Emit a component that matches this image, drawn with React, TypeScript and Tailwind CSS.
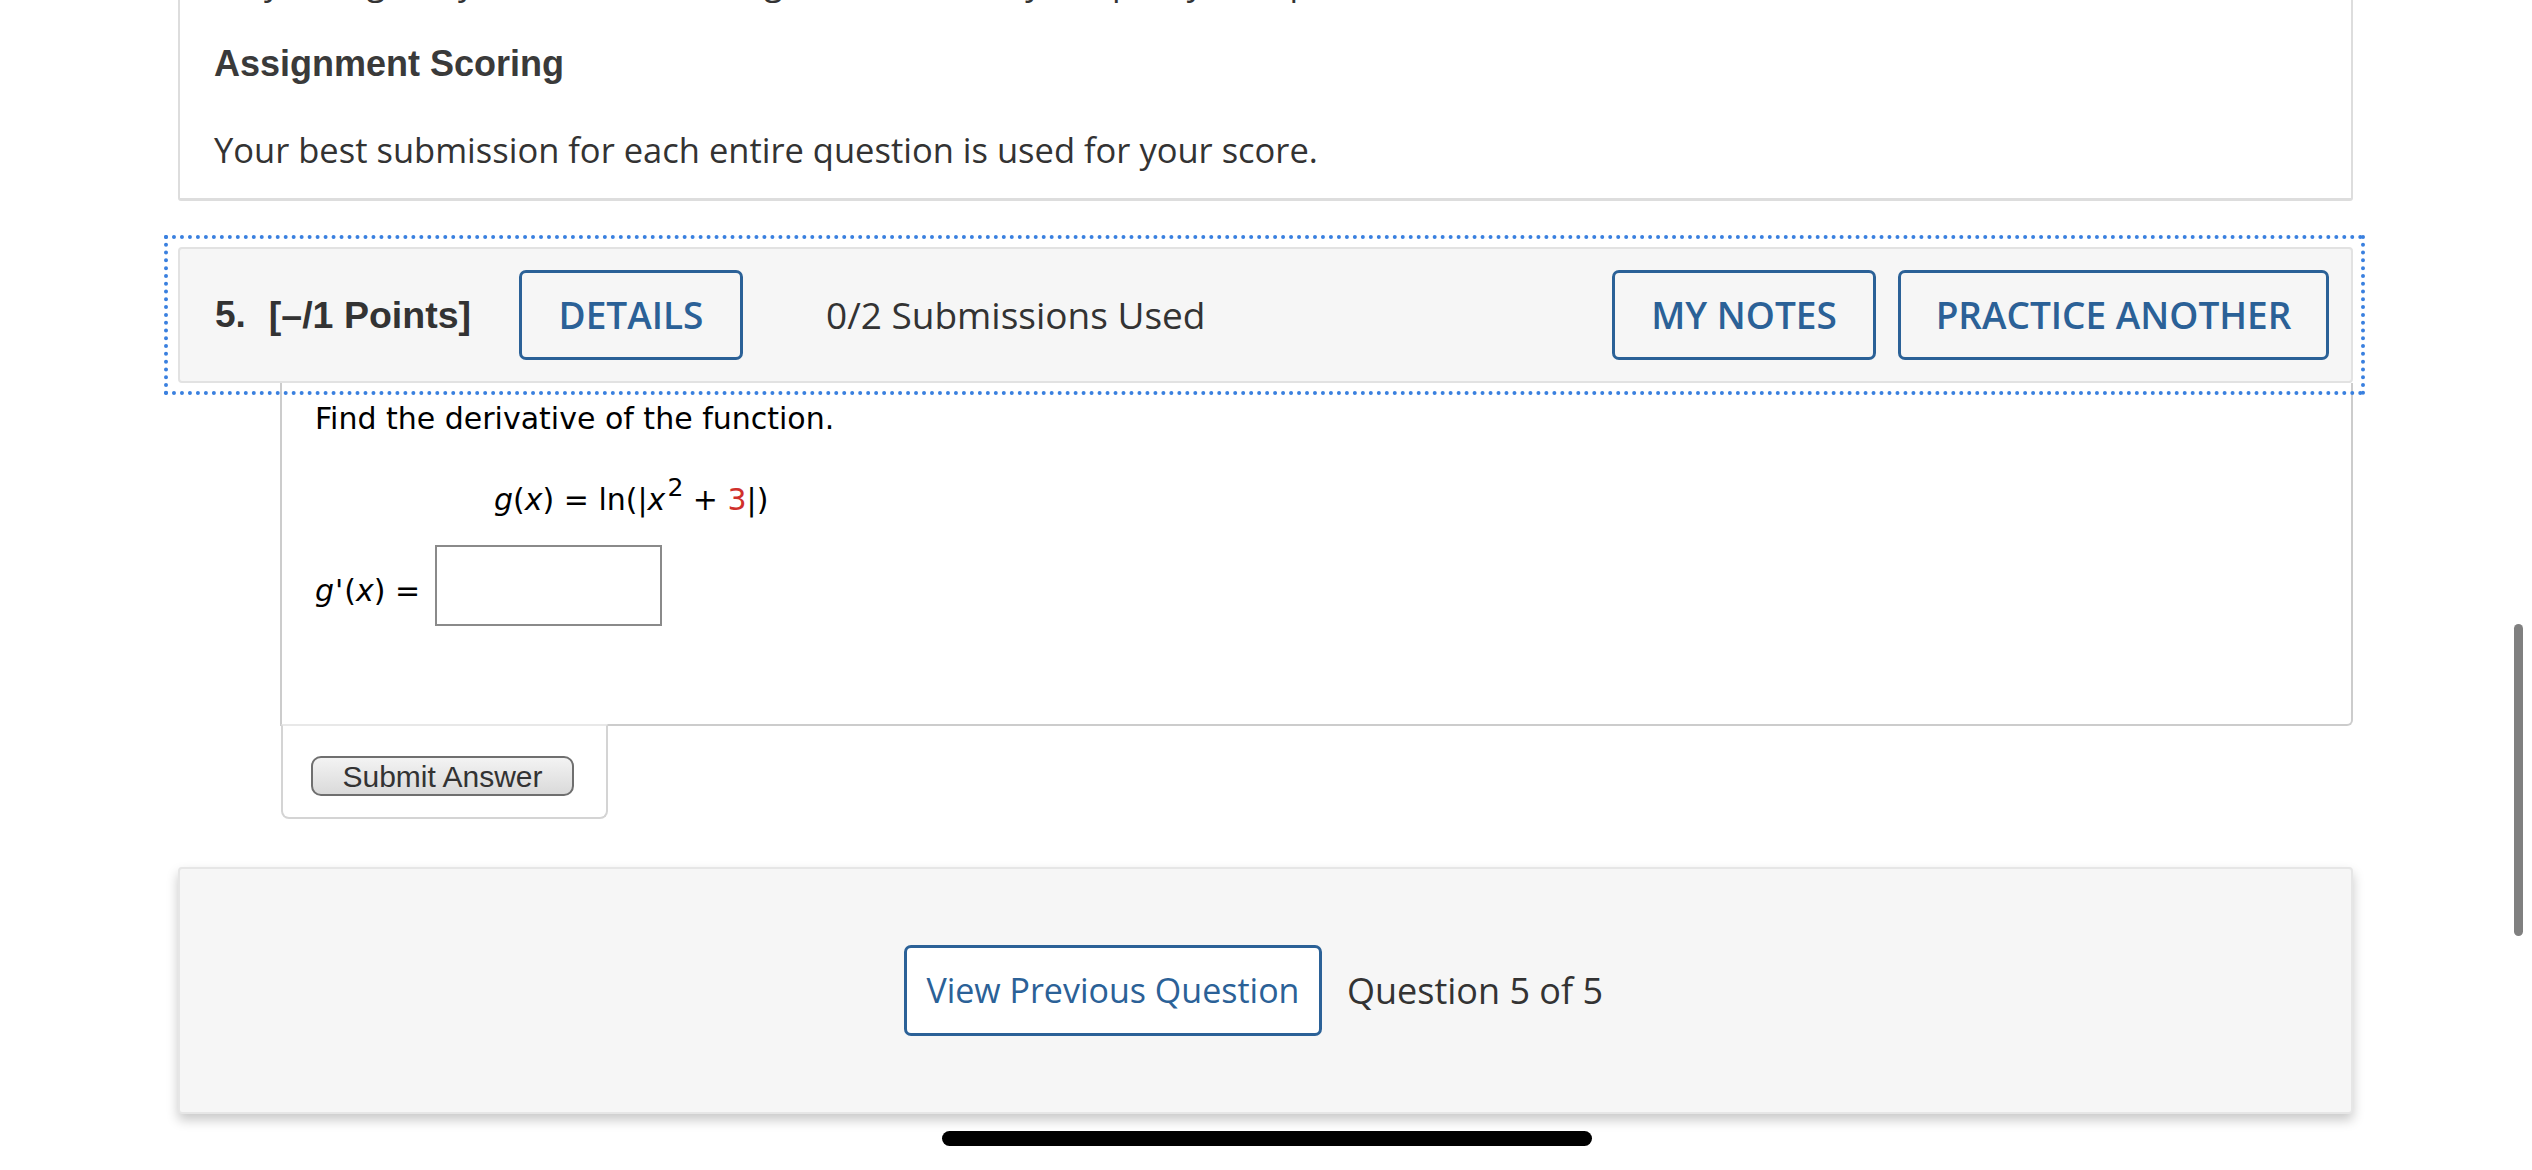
import React from "react";

const openSans = { fontFamily: '"Open Sans", "Liberation Sans", sans-serif' };

function OutlineButton({ label, w }: { label: string; w: string }) {
  return (
    <button
      className={`${w} h-[90px] shrink-0 rounded-[7px] border-[3px] border-[#2b6197] text-[37px] font-semibold text-[#2b6197] flex items-center justify-center`}
      style={openSans}
    >
      {label}
    </button>
  );
}

export default function App() {
  return (
    <div className="relative h-[1170px] w-[2532px] overflow-hidden bg-white">
      <div className="pl-[178px] pr-[179px]">
        {/* previous info card, scrolled partly out of view */}
        <div className="rounded-b-[3px] border-x-2 border-b-[3px] border-[#dddddd] px-[34px] pb-[24px]">
          <p
            className="-mt-[42px] h-[48px] whitespace-nowrap text-[34px] leading-[48px] text-[#333]"
            style={openSans}
          >
            only changes if you submit or change the answer, by the policy set up.
          </p>
          <h2 className="mt-[36px] text-[36px] font-bold leading-[44px] text-[#3a3a3a] [font-family:'Liberation_Sans',Arial,sans-serif]">
            Assignment Scoring
          </h2>
          <p className="mt-[40px] text-[34.5px] leading-[48px] text-[#333]" style={openSans}>
            Your best submission for each entire question is used for your score.
          </p>
        </div>

        {/* question header */}
        <div className="relative mt-[46px] flex h-[136px] items-center rounded-[4px] border-2 border-[#e2e2e2] bg-[#f6f6f6] pl-[35px] pr-[22px]">
          <span className="pointer-events-none absolute -top-[14px] -bottom-[14px] -left-[16px] -right-[14px] border-[4px] border-dotted border-[#3a80df]" />
          <span className="text-[37px] font-bold text-[#333] [font-family:'Liberation_Sans',Arial,sans-serif]">
            5.
          </span>
          <span className="ml-[23px] text-[37.5px] font-bold text-[#333] [font-family:'Liberation_Sans',Arial,sans-serif]">
            [–/1 Points]
          </span>
          <div className="ml-[48px]">
            <OutlineButton label="DETAILS" w="w-[224px]" />
          </div>
          <span className="ml-[83px] text-[37px] text-[#333]" style={openSans}>
            0/2 Submissions Used
          </span>
          <div className="ml-auto flex gap-[22px]">
            <OutlineButton label="MY NOTES" w="w-[264px]" />
            <OutlineButton label="PRACTICE ANOTHER" w="w-[431px]" />
          </div>
        </div>

        {/* question body */}
        <div className="ml-[102px] rounded-br-[6px] border-x-2 border-b-2 border-[#cccccc] bg-white pb-[98px] pl-[33px] text-[30px] text-black [font-family:'DejaVu_Sans',Verdana,sans-serif]">
          <p className="pt-[16px] leading-[40px]">Find the derivative of the function.</p>
          <p className="ml-[179px] mt-[41px] leading-[40px]">
            <span className="italic">g</span>(<span className="italic">x</span>) = ln(|
            <span className="italic">x</span>
            <sup className="relative -top-[14px] ml-[2px] text-[25px]">2</sup> + <span className="text-[#d0302b]">3</span>|)
          </p>
          <div className="mt-[25px] flex items-center">
            <span className="mt-[10px] leading-[40px]">
              <span className="italic">g</span>
              <span className="mx-[1px]">'</span>(<span className="italic">x</span>) =
            </span>
            <div className="ml-[15px] h-[81px] w-[227px] border-2 border-[#8a8a8a] bg-white" />
          </div>
        </div>

        {/* submit */}
        <div className="relative -mt-[2px] ml-[103px] w-[327px] rounded-b-[8px] border-x-2 border-b-2 border-t-2 border-x-[#d4d4d4] border-b-[#d4d4d4] border-t-[#e8e8e8] bg-white pb-[21px] pl-[28px] pt-[30px]">
          <button className="flex h-[40px] w-[263px] items-center justify-center rounded-[10px] border-2 border-[#6f6f6f] bg-gradient-to-b from-[#f3f3f3] to-[#dadada] text-[30px] text-[#333] [font-family:'Liberation_Sans',Arial,sans-serif]">
            Submit Answer
          </button>
        </div>

        {/* navigation */}
        <div className="mt-[48px] flex h-[247px] items-center justify-center gap-[25px] rounded-[4px] border-2 border-[#e6e6e6] bg-[#f6f6f6] pr-[24px] shadow-[0_6px_12px_rgba(0,0,0,0.22)]">
          <button
            className="h-[91px] w-[418px] rounded-[7px] border-[3px] border-[#2b6197] bg-white text-[34px] text-[#2b6197]"
            style={openSans}
          >
            View Previous Question
          </button>
          <span className="text-[36px] text-[#333]" style={openSans}>
            Question 5 of 5
          </span>
        </div>
      </div>

      {/* iOS overlays */}
      <div className="absolute left-[2514px] top-[624px] h-[312px] w-[9px] rounded-full bg-[#808080]" />
      <div className="absolute left-[942px] top-[1131px] h-[15px] w-[650px] rounded-full bg-black" />
    </div>
  );
}
